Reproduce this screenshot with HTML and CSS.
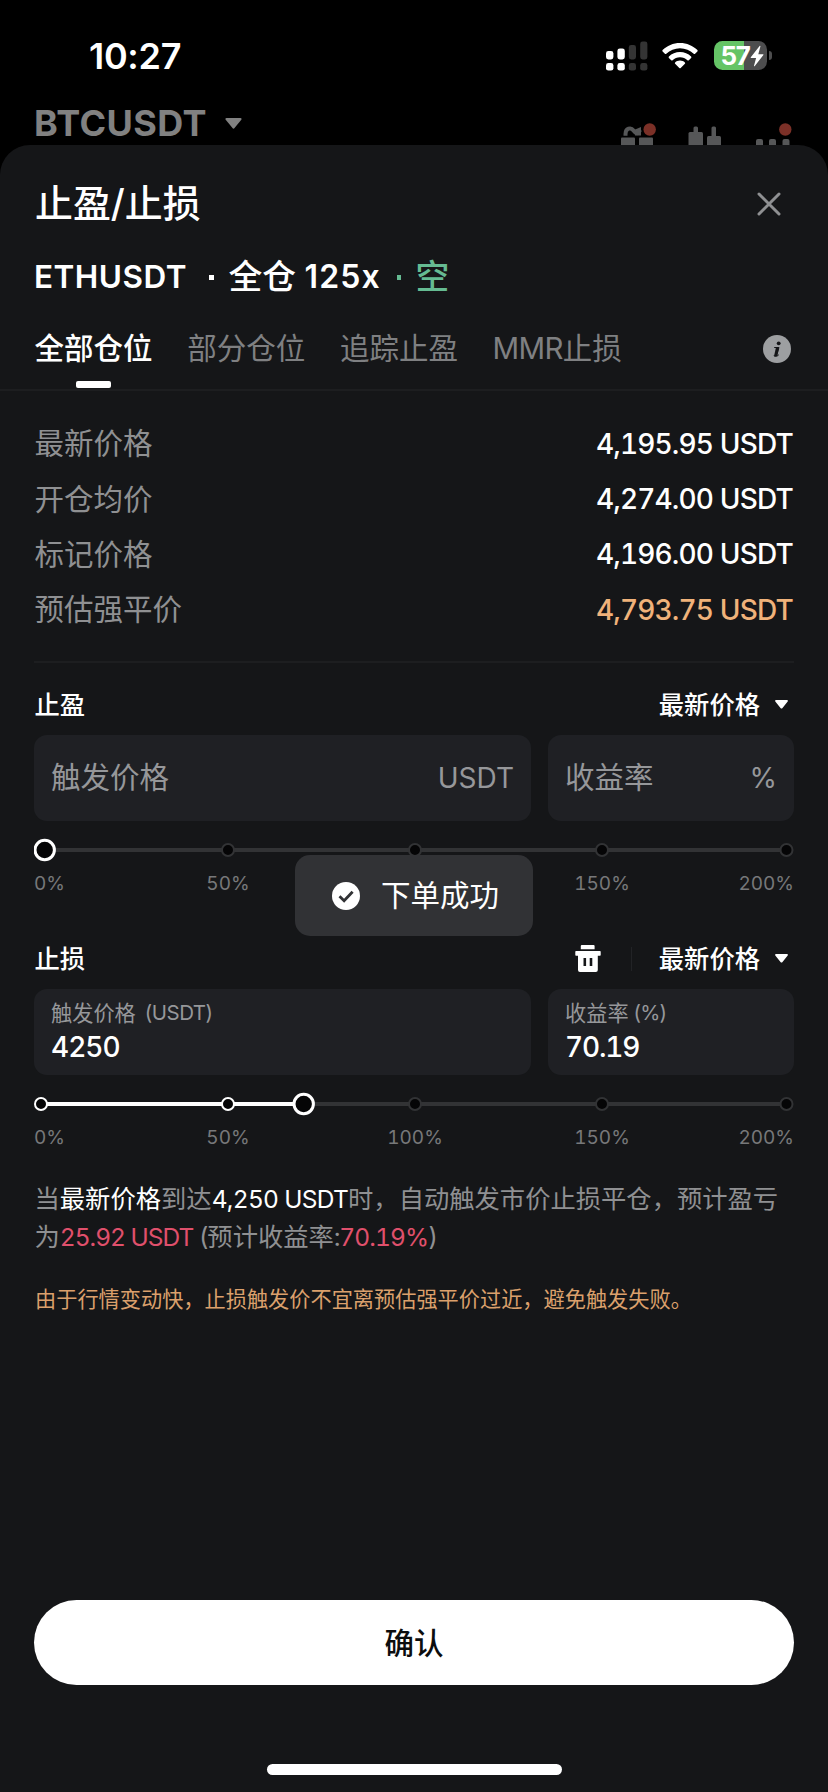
FILE: index.html
```html
<!DOCTYPE html>
<html lang="zh-CN">
<head>
<meta charset="utf-8">
<title>止盈/止损</title>
<link rel="stylesheet" href="styles.css">
</head>
<body>
<div class="screen">
  <header class="status">
    <span class="time">10:27</span>
    <div class="status-icons">
      <svg class="signal" width="42" height="30" viewBox="0 0 42 30">
        <g fill="#fff"><rect x="0" y="10" width="7.4" height="8.5" rx="2.4"/><rect x="11.4" y="7.5" width="7.4" height="11" rx="2.4"/><rect x="0" y="22" width="7.4" height="7.6" rx="2.4"/><rect x="11.4" y="22" width="7.4" height="7.6" rx="2.4"/></g>
        <g fill="#343434"><rect x="22.8" y="4" width="7.2" height="14.5" rx="2.4"/><rect x="34.2" y="0.5" width="7.2" height="18" rx="2.4"/><rect x="22.8" y="22" width="7.2" height="7.6" rx="2.4"/><rect x="34.2" y="22" width="7.2" height="7.6" rx="2.4"/></g>
      </svg>
      <svg class="wifi" width="36" height="28" viewBox="0 0 36 28" fill="#fff">
        <path d="M18 1C11.200 1 5 3.700.6 8.100c-.4.400-.4 1 0 1.400l2.300 2.300c.4.400 1 .4 1.400 0C7.900 8.300 12.700 6.200 18 6.200s10.100 2.100 13.700 5.600c.4.400 1 .4 1.400 0l2.300-2.300c.4-.4.4-1 0-1.400C31 3.700 24.800 1 18 1z"/>
        <path d="M18 10c-4.300 0-8.200 1.700-11.100 4.500-.4.400-.4 1 0 1.400l2.300 2.300c.4.400 1 .4 1.400 0 1.900-1.900 4.500-3 7.400-3s5.500 1.100 7.400 3c.4.400 1 .4 1.400 0l2.300-2.300c.4-.4.400-1 0-1.400C26.200 11.700 22.300 10 18 10z"/>
        <path d="M18 18.500c-1.900 0-3.600.7-4.900 1.900-.4.400-.4 1 0 1.400l4.200 4.200c.4.400 1 .4 1.400 0l4.200-4.200c.4-.4.4-1 0-1.400-1.300-1.200-3-1.900-4.900-1.900z"/>
      </svg>
      <div class="battery">
        <span class="battery-level">57</span>
        <svg width="14" height="22" viewBox="0 0 14 22" fill="#fff"><path d="M9.600 1 .8 12.300c-.3.400 0 .8.4.8h4.900L4 20.700c-.1.600.4.800.8.400L13.400 10c.3-.4 0-.8-.4-.8H8.300l2.100-7.700c.1-.6-.4-.9-.8-.5z"/></svg>
        <i class="battery-cap"></i>
      </div>
    </div>
  </header>
  <div class="market">
    <div class="market-name"><b>BTCUSDT</b><svg width="17" height="11" viewBox="0 0 17 11" fill="#818181"><path d="M1.500 0h14c1 0 1.400 1 .8 1.700l-6.800 8.400c-.6.700-1.400.7-2 0L.7 1.700C.1 1 .5 0 1.500 0z"/></svg></div>
    <svg class="market-icons" width="172" height="24" viewBox="0 0 172 24">
      <g fill="#565758"><rect x="0" y="15.500" width="14" height="9" rx="1"/><rect x="18" y="15.500" width="14" height="9" rx="1"/></g>
      <path d="M4.500 13.800V12c0-6 5.500-7 8-3.500s4.500 4 6.500-.5" fill="none" stroke="#565758" stroke-width="4"/>
      <g fill="#565758"><path d="m13 8 7-3v8.500h-6z"/><rect x="67.500" y="10" width="14.500" height="15" rx="1.500"/><rect x="72.500" y="4.500" width="4.500" height="8" rx="1.500"/><rect x="86" y="14" width="14" height="11" rx="1.500"/><rect x="90.500" y="4.500" width="4.500" height="12" rx="1.500"/><rect x="135" y="17" width="7" height="8" rx="2"/><rect x="148" y="17" width="7" height="8" rx="2"/><rect x="161.500" y="17" width="7" height="8" rx="2"/></g>
      <circle cx="28.700" cy="7.500" r="6.200" fill="#7b3027"/><circle cx="164.300" cy="7.500" r="6.200" fill="#7b3027"/>
    </svg>
  </div>

  <main class="sheet">
    <div class="title-row">
      <h1>止盈/止损</h1>
      <svg width="26" height="26" viewBox="0 0 26 26" stroke="#8f9092" stroke-width="3" stroke-linecap="round"><path d="m3 3 20 20M23 3 3 23"/></svg>
    </div>
    <div class="pair"><span class="pair-name">ETHUSDT</span><i class="dot"></i><span class="mode">全仓</span><span class="lever">125x</span><i class="dot green"></i><span class="side">空</span></div>
    <nav class="tabs">
      <span class="tab active">全部仓位</span><span class="tab">部分仓位</span><span class="tab">追踪止盈</span><span class="tab"><span class="mmr">MMR</span>止损</span>
      <svg class="info" width="28" height="28" viewBox="0 0 28 28"><circle cx="14" cy="14" r="14" fill="#9d9fa1"/><circle cx="15.700" cy="8.300" r="1.900" fill="#151618"/><path d="M11.200 12.500h4.700l-2 7.700c-.2.900.6.900 2-.6M11 20.600c.3 1.100 2.100.9 3.300.2" stroke="#151618" stroke-width="1" fill="none"/><path d="M13 12.200h3.200l-2.300 9H11z" fill="#151618"/></svg>
    </nav>
    <section class="prices">
      <div class="price"><span>最新价格</span><span class="num">4,195.95 USDT</span></div>
      <div class="price"><span>开仓均价</span><span class="num">4,274.00 USDT</span></div>
      <div class="price"><span>标记价格</span><span class="num">4,196.00 USDT</span></div>
      <div class="price"><span>预估强平价</span><span class="num orange">4,793.75 USDT</span></div>
    </section>

    <section class="order profit">
      <div class="order-head"><span>止盈</span><span class="select">最新价格<svg width="13" height="9" viewBox="0 0 13 9" fill="#fff"><path d="M1 0h11c.8 0 1.200.8.700 1.400L7.300 8.200c-.5.500-1.100.5-1.600 0L.3 1.400C-.2.800.2 0 1 0z"/></svg></span></div>
      <div class="fields">
        <div class="field"><span>触发价格</span><span class="unit">USDT</span></div>
        <div class="field"><span>收益率</span><span class="unit pct">%</span></div>
      </div>
      <svg class="slider" width="760" height="26" viewBox="34 0 760 26">
        <path d="M44 13h743" stroke="#323335" stroke-width="4"/>
        <g fill="#050506" stroke="#323335" stroke-width="2"><circle cx="228" cy="13" r="6"/><circle cx="415" cy="13" r="6"/><circle cx="602" cy="13" r="6"/><circle cx="786.500" cy="13" r="6"/></g>
        <circle cx="44.700" cy="13" r="9.700" fill="#050506" stroke="#fff" stroke-width="3"/>
      </svg>
      <div class="scale"><span>0%</span><span>50%</span><span></span><span>150%</span><span>200%</span></div>
    </section>

    <section class="order loss">
      <div class="order-head"><span>止损</span><span class="actions"><svg width="26" height="27" viewBox="0 0 26 27"><path fill="#fff" fill-rule="evenodd" d="M6.800 0h11.800q1 0 1 1v3.300h-13.800V1q0-1 1-1zM1 6h24q.7 0 .7.700V10q0 .7-.7.700h-2.200V25q0 2-2 2H5q-2 0-2-2V10.700H1q-.7 0-.7-.7V6.700Q.3 6 1 6zM8.500 13v8h2.600v-8zM14.700 13v8h2.600v-8z"/></svg><i class="bar"></i><span class="select">最新价格<svg width="13" height="9" viewBox="0 0 13 9" fill="#fff"><path d="M1 0h11c.8 0 1.200.8.700 1.400L7.300 8.200c-.5.500-1.100.5-1.600 0L.3 1.400C-.2.800.2 0 1 0z"/></svg></span></span></div>
      <div class="fields">
        <div class="field filled"><span class="label">触发价格<span class="label-unit">(USDT)</span></span><span class="value">4250</span></div>
        <div class="field filled"><span class="label">收益率<span class="label-pct">(%)</span></span><span class="value">70.19</span></div>
      </div>
      <svg class="slider" width="760" height="26" viewBox="34 0 760 26">
        <path d="M303 13h484" stroke="#323335" stroke-width="4"/><path d="M41 13h262" stroke="#fff" stroke-width="4"/>
        <g fill="#050506" stroke="#323335" stroke-width="2"><circle cx="415" cy="13" r="6"/><circle cx="602" cy="13" r="6"/><circle cx="786.500" cy="13" r="6"/></g>
        <g fill="#050506" stroke="#fff" stroke-width="2"><circle cx="41" cy="13" r="6"/><circle cx="228" cy="13" r="6"/></g>
        <circle cx="303.700" cy="13" r="9.700" fill="#050506" stroke="#fff" stroke-width="3"/>
      </svg>
      <div class="scale"><span>0%</span><span>50%</span><span>100%</span><span>150%</span><span>200%</span></div>
    </section>

    <p class="summary">当<span class="white">最新价格</span>到达<span class="white lat">4,250 USDT</span>时，自动触发市价止损平仓，预计盈亏<br>为<span class="red lat">25.92 USDT</span><span class="paren"> (</span>预计收益率<span class="paren">:</span><span class="red rate">70.19%</span><span class="paren">)</span></p>
    <p class="warning">由于行情变动快，止损触发价不宜离预估强平价过近，避免触发失败。</p>
    <button class="confirm">确认</button>
    <i class="home"></i>
  </main>

  <div class="toast"><svg width="28" height="28" viewBox="0 0 28 28"><circle cx="14" cy="14" r="14" fill="#fff"/><path d="m7.500 14.300 4.600 4.500 8.500-9" fill="none" stroke="#313235" stroke-width="2.800"/></svg><span>下单成功</span></div>
</div>
</body>
</html>
```
FILE: styles.css
```css
* { box-sizing: border-box; }
body { margin: 0; background: #000; }
.screen {
  position: relative;
  width: 828px; height: 1792px;
  display: flex; flex-direction: column;
  overflow: hidden;
  background: #000; color: #fff;
  font-family: Inter, "Noto Sans CJK SC", sans-serif;
  font-size: 29.5px; line-height: 1;
}
svg { display: block; flex: none; }
i { display: block; flex: none; }

.status { height: 90px; padding: 21px 0 0 89px; display: flex; justify-content: space-between; align-items: center; }
.time { font-size: 36px; font-weight: 600; letter-spacing: -0.3px; }
.status-icons { display: flex; align-items: center; width: 222.500px; height: 30px; }
.wifi { margin-left: 14.500px; }
.battery {
  position: relative;
  width: 53px; height: 29px; margin-left: 16px; padding-left: 6.500px;
  display: flex; align-items: center; gap: 1px;
  border-radius: 8.500px;
  background: linear-gradient(90deg, #65c466 57%, #4d4d4e 57%);
}
.battery-level { font-size: 26px; font-weight: 700; letter-spacing: -1.300px; width: 28px; }
.battery-cap { position: absolute; right: -5px; top: 10px; width: 3px; height: 9px; border-radius: 0 3px 3px 0; background: #4d4d4e; }

.market { height: 55px; padding: 0 34px 0 34px; display: flex; justify-content: space-between; }
.market-name { display: flex; align-items: center; gap: 19px; height: 66px; color: #818181; font-size: 36px; }
.market-name b { font-weight: 700; width: 172px; letter-spacing: 0.400px; white-space: nowrap; }
.market-icons { margin-top: 32px; margin-right: 1px; }

.sheet {
  position: relative;
  flex: none; height: 1647px; padding: 0 34px;
  display: flex; flex-direction: column;
  background: #151618; border-radius: 30px 30px 0 0;
}
.title-row { height: 118px; display: flex; justify-content: space-between; align-items: center; padding: 0 12px 0 1px; }
h1 { margin: 0; font-size: 37.900px; font-weight: 500; }
.pair { height: 28px; display: flex; align-items: center; font-size: 33.800px; font-weight: 600; white-space: nowrap; }
.pair-name { width: 175px; font-size: 31.500px; letter-spacing: 0.500px; }
.dot { width: 5px; height: 5px; background: #fff; }
.pair .mode { width: 76px; margin-left: 14.500px; font-weight: 500; }
.lever { width: 92px; font-size: 32px; letter-spacing: 1.100px; }
.dot.green { background: #65bb92; width: 4px; }
.side { margin-left: 15px; color: #65bb92; font-weight: 500; }

.tabs { height: 100px; margin: 0 -34px; padding: 17px 37px 0 34.500px; display: flex; align-items: center; gap: 34.700px; border-bottom: 2px solid #1d1e20; color: #7f8082; }
.tab { position: relative; }
.tab.active { color: #fff; font-weight: 500; }
.tab.active::after { content: ""; position: absolute; left: 41.500px; top: 47px; width: 35px; height: 7px; border-radius: 2px; background: #fff; }
.mmr { letter-spacing: -0.700px; }
.info { margin-left: auto; }

.prices { height: 272px; padding: 25.500px 2px 0 0.500px; border-bottom: 2px solid #1d1e20; }
.price { height: 55.200px; display: flex; justify-content: space-between; align-items: center; color: #8f9092; }
.num { color: #fff; font-size: 28px; font-weight: 500; font-feature-settings: "tnum"; letter-spacing: -0.850px; margin-right: -0.850px; }
.num.orange { color: #f0b27a; }

.order-head { height: 72px; padding: 11px 6px 0 0.500px; display: flex; justify-content: space-between; align-items: center; font-size: 25.300px; font-weight: 500; }
.select { display: flex; align-items: center; gap: 15px; }
.actions { display: flex; align-items: center; }
.bar { width: 1px; height: 24px; margin: 0 27px 0 30px; background: #222326; }
.fields { display: grid; grid-template-columns: 497px 246px; gap: 17px; height: 86px; }
.field { padding: 0 17px; display: flex; justify-content: space-between; align-items: center; border-radius: 13px; background: #1f2024; color: #96979a; }
.unit { font-size: 28px; }
.filled { flex-direction: column; align-items: flex-start; justify-content: flex-start; padding-top: 13px; }
.label { font-size: 21.200px; line-height: 22px; display: flex; }
.label-unit { margin-left: 9px; font-size: 20.500px; letter-spacing: -0.500px; }
.label-pct { margin-left: 5px; font-size: 20.500px; letter-spacing: -0.900px; }
.value { margin-top: 9px; line-height: 28px; font-size: 28px; font-weight: 500; color: #fff; font-feature-settings: "tnum"; letter-spacing: -1px; }
.filled:last-child .value { letter-spacing: -1.200px; word-spacing: 0; }
.slider { margin-top: 16px; }
.scale { display: grid; grid-template-columns: 100.500px 187px 187px 187px 98.500px; height: 20px; margin-top: 10.500px; align-items: center; text-align: center; color: #77787a; font-size: 19px; font-feature-settings: "tnum"; }
.scale span:first-child { text-align: left; }
.scale span:last-child { text-align: right; }
.profit { height: 254px; }
.loss { height: 262.500px; }

.summary { margin: 0; padding: 0 0.500px; font-size: 25.300px; line-height: 37.500px; color: #8f9092; white-space: nowrap; font-feature-settings: "tnum"; }
.white { color: #fff; }
.red { color: #e0506c; }
.lat { font-size: 24.500px; letter-spacing: -0.700px; }
.red.lat { letter-spacing: -1px; }
.rate { font-size: 24.500px; letter-spacing: -0.900px; }
.paren { letter-spacing: -1.300px; }
.warning { margin: 31.500px 0 0; padding-left: 1px; font-size: 21.200px; line-height: 22px; color: #dba06c; white-space: nowrap; }
.confirm { position: absolute; left: 34px; bottom: 107px; width: 760px; height: 85px; padding: 0 0 3px; border: 0; border-radius: 43px; background: #fff; color: #0c0d0e; font: 500 29.500px Inter, "Noto Sans CJK SC", sans-serif; }
.home { position: absolute; left: 267px; bottom: 17px; width: 295px; height: 11px; border-radius: 6px; background: #fff; }

.toast { position: absolute; left: 295px; top: 855px; width: 238px; height: 81px; padding-left: 37px; display: flex; align-items: center; gap: 21px; border-radius: 15px; background: #313235; }
```
